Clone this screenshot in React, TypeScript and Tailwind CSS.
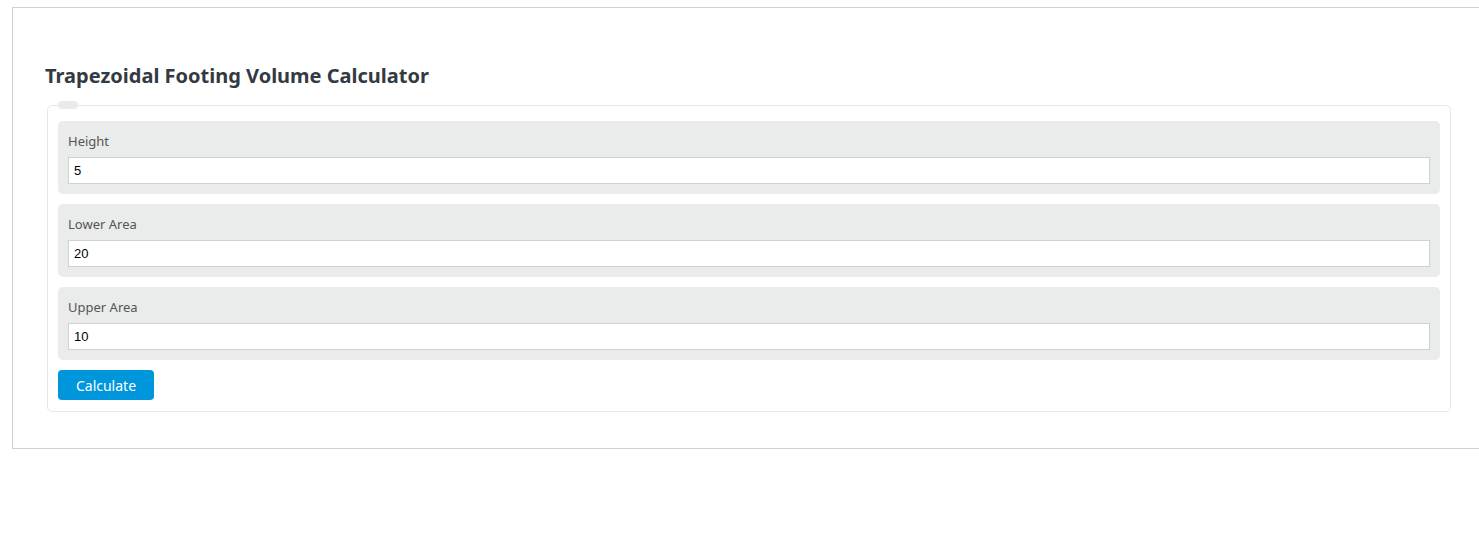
export default function App() {
  return (
    <div className="bg-white min-h-[546px] pt-[7px] pl-[12px]" style={{ fontFamily: '"Noto Sans", "Open Sans", sans-serif' }}>
      <div className="border-l border-t border-b border-[#d0d0d0] pl-[34px] pt-[55px] pb-[36px]">
        <h1 className="text-[20px] leading-[26px] font-bold text-[#333a42] -ml-[2px] mb-[16px]">
          Trapezoidal Footing Volume Calculator
        </h1>
        <div className="relative w-[1404px] border border-[#e6e7e7] rounded-[5px] px-[10px] pt-[15px] pb-[11px]">
          <span className="absolute left-[10px] -top-[5px] w-[20px] h-[8px] rounded-full bg-[#e9eaea]" />
          <div className="flex flex-col gap-[10px]">
            {[
              ["Height", "5"],
              ["Lower Area", "20"],
              ["Upper Area", "10"],
            ].map(([label, value]) => (
              <div key={label} className="bg-[#eaebeb] rounded-[5px] p-[10px]">
                <div className="text-[13px] leading-[20px] text-[#555]">{label}</div>
                <input
                  readOnly
                  value={value}
                  className="mt-[6px] block w-full h-[27px] bg-white border border-[#cfd0d0] px-[5px] text-[13px] text-black outline-none"
                  style={{ fontFamily: '"Liberation Sans", Arial, sans-serif' }}
                />
              </div>
            ))}
          </div>
          <button className="mt-[10px] w-[96px] h-[30px] rounded-[4px] bg-[#0096db] text-white text-[14px]">
            Calculate
          </button>
        </div>
      </div>
    </div>
  );
}
